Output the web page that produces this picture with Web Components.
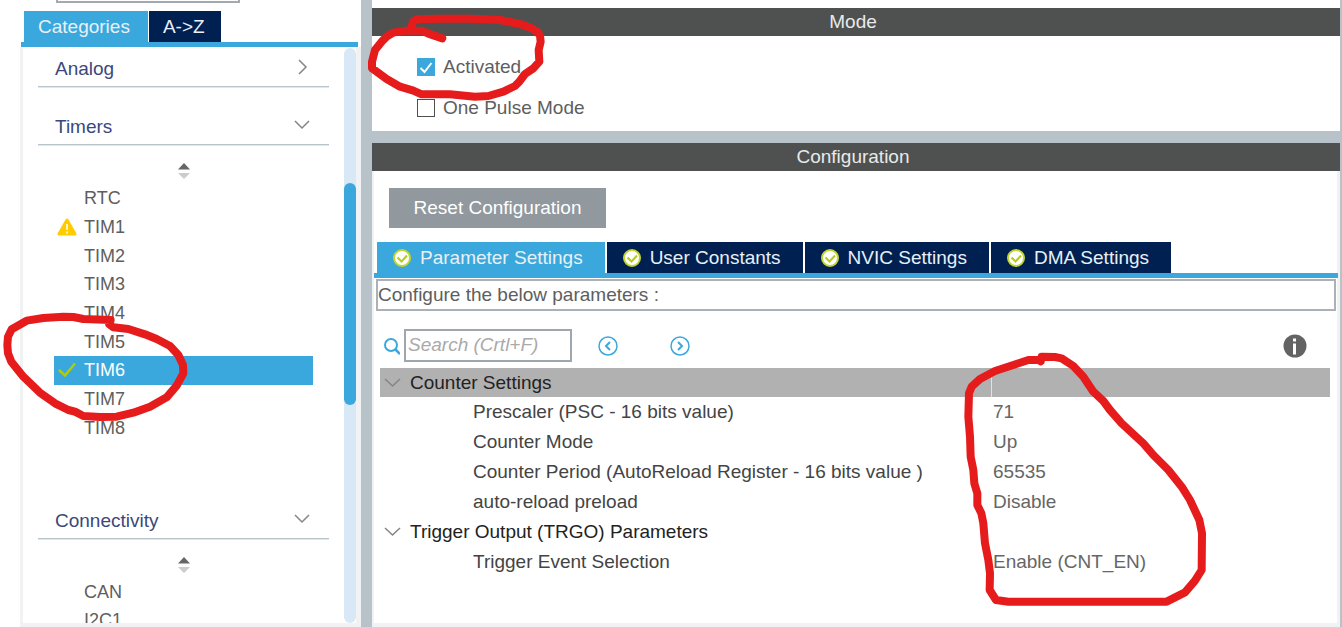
<!DOCTYPE html>
<html lang="en">
<head>
<meta charset="utf-8">
<title>Timer configuration</title>
<style>
html, body { margin: 0; height: 100%; }
body { position: relative; background: #fff; font: 19px/24px "Liberation Sans", Arial, sans-serif; color: #5e5e5e; overflow: hidden;
  --blue: #3aa8dc; --navy: #002052; --edge: #b7c3c9; --frame: #f0f2f4; }
</style>
</head>
<body>
<app-shell>
  <category-browser slot="side">
    <category-group label="Analog"></category-group>
    <category-group label="Timers" open>
      <ip-item>RTC</ip-item>
      <ip-item state="warning">TIM1</ip-item>
      <ip-item>TIM2</ip-item>
      <ip-item>TIM3</ip-item>
      <ip-item>TIM4</ip-item>
      <ip-item>TIM5</ip-item>
      <ip-item state="ok" selected>TIM6</ip-item>
      <ip-item>TIM7</ip-item>
      <ip-item>TIM8</ip-item>
    </category-group>
    <category-group label="Connectivity" open>
      <ip-item>CAN</ip-item>
      <ip-item>I2C1</ip-item>
    </category-group>
  </category-browser>
  <titled-panel label="Mode">
    <mode-options>
      <check-option checked>Activated</check-option>
      <check-option>One Pulse Mode</check-option>
    </mode-options>
  </titled-panel>
  <titled-panel label="Configuration" grow>
    <config-view></config-view>
  </titled-panel>
</app-shell>
<pen-marks></pen-marks>

<script>
const define = (name, html) => customElements.define(name, class extends HTMLElement {
  connectedCallback() {
    if (this.shadowRoot) return;
    const root = this.attachShadow({ mode: 'open' });
    root.innerHTML = '<style>*{box-sizing:border-box}button{font:inherit;border:0;margin:0;padding:0;background:none;color:inherit}svg{display:block;flex:none}</style>' +
      (typeof html === 'function' ? html(this) : html);
  }
});

define('app-shell', `<style>
  :host { display: flex; height: 100vh; }
  .side { flex: 0 0 361px; min-width: 0; display: flex; }
  main { flex: 1; min-width: 0; display: flex; flex-direction: column; gap: 12px; border: solid var(--edge); border-width: 0 2px 0 11px; padding-top: 8px; background: linear-gradient(#fff 8px, var(--edge) 8px); }
</style><div class="side"><slot name="side"></slot></div><main><slot></slot></main>`);

define('category-browser', `<style>
  :host { display: flex; flex-direction: column; flex: 1; min-width: 0; height: 100vh; overflow: hidden; }
  .find { height: 3px; overflow: hidden; display: flex; align-items: flex-end; padding-left: 56px; flex: none; }
  input { width: 184px; height: 30px; border: 2px solid #a3a9ae; flex: none; }
  nav { display: flex; gap: 1px; margin: 8px 3px 0 21px; padding-left: 3px; border-bottom: 5px solid var(--blue); flex: none; }
  button { height: 31px; padding: 0 16px 0 14px; background: var(--navy); color: #e9f0f6; }
  button.on { background: var(--blue); padding-right: 18px; }
  .body { flex: 1; min-height: 0; display: flex; margin-left: 20px; border: solid var(--frame); border-width: 0 5px 4px 3px; }
  .list { flex: 1; min-width: 0; overflow: hidden; padding: 0 15px; }
  .track { width: 12px; margin-top: 1px; border-radius: 6px; background: #d9e8f6; padding-top: 135px; }
  .thumb { height: 222px; border-radius: 6px; background: var(--blue); }
</style>
<div class="find"><input aria-label="Find peripheral"></div>
<nav><button class="on">Categories</button><button>A-&gt;Z</button></nav>
<div class="body"><div class="list"><slot></slot></div><div class="track"><div class="thumb"></div></div></div>`);

define('category-group', el => `<style>
  :host { display: block; padding-bottom: 18px; }
  .head { display: flex; align-items: center; justify-content: space-between; width: 100%; height: 40px; padding: 4px 19px 0 17px; border-bottom: 1px solid #b9c4ca; box-shadow: 0 1px #e1e6e9; color: #3b487b; }
  .head svg { margin-bottom: 4px; }
  .spin { display: block; margin: 17px auto 4px; }
  .items { display: grid; grid-auto-rows: 1fr; margin: 0 16px; }
  .items.long { height: 258px; }
  :host([label="Timers"]) { padding-bottom: 57px; }
</style>
<button class="head">${el.getAttribute('label')}${el.hasAttribute('open')
  ? '<svg width="16" height="16"><path d="M1 4l7 7 7-7" fill="none" stroke="#858585" stroke-width="1.5"/></svg>'
  : '<svg width="16" height="16"><path d="M5 1l7 7-7 7" fill="none" stroke="#858585" stroke-width="1.5"/></svg>'}</button>
${el.hasAttribute('open') ? `<svg class="spin" width="12" height="18"><path d="M0 7.500l6-6.500 6 6.500z" fill="#666"/><path d="M0 11l6 6 6-6z" fill="#ccc"/></svg>
<div class="items ${el.children.length > 2 ? 'long' : ''}"><slot></slot></div>` : ''}`);

define('ip-item', el => `<style>
  :host { display: flex; min-height: 28px; align-items: center; font-size: 18px; padding-left: 3px; }
  :host([selected]) { background: var(--blue); color: #fff; }
  .mark { width: 20px; margin-right: 7px; }
</style><span class="mark">${{
  warning: '<svg width="20" height="18"><path d="M10 2l8 14H2z" fill="#fc0" stroke="#fc0" stroke-width="3" stroke-linejoin="round"/><path d="M10 6v6M10 13.500v2" stroke="#fff" stroke-width="1.500"/></svg>',
  ok: '<svg width="20" height="18"><path d="M2 9l6 5.500L18 2.500" fill="none" stroke="#b4cc04" stroke-width="2.500"/></svg>'
}[el.getAttribute('state')] || ''}</span><slot></slot>`);

define('titled-panel', el => `<style>
  :host { display: flex; flex-direction: column; background: #fff; min-height: 0; }
  :host([grow]) { flex: 1; }
  h2 { margin: 0; height: 28px; line-height: 28px; padding-right: 6px; text-align: center; font-size: 19px; font-weight: 400; background: #4f5150; color: #e8eaea; flex: none; }
</style><h2>${el.getAttribute('label')}</h2><slot></slot>`);

define('mode-options', `<style>
  :host { display: flex; flex-direction: column; gap: 17px; padding: 19px 45px 11px; }
</style><slot></slot>`);

define('check-option', el => `<style>
  :host { display: block; }
  label { display: flex; align-items: center; gap: 8px; }
  input { appearance: none; width: 18px; height: 18px; margin: 0; border: 1px solid #4f4f4f; background: #fff; }
  input:checked { border-color: var(--blue); background: var(--blue); }
  .box { display: grid; }
  .box > * { grid-area: 1 / 1; }
  svg { pointer-events: none; }
</style><label><span class="box"><input type="checkbox" ${el.hasAttribute('checked') ? 'checked' : ''}>
${el.hasAttribute('checked') ? '<svg width="18" height="18"><path d="M3.500 10l4 4L14.500 5" fill="none" stroke="#fff" stroke-width="2"/></svg>' : ''}</span><span><slot></slot></span></label>`);

define('config-view', `<style>
  :host { display: flex; flex-direction: column; flex: 1; min-height: 0; border: solid var(--frame); border-width: 0 3px 4px 2px; }
  .reset { align-self: flex-start; margin: 17px 0 14px 15px; width: 217px; height: 40px; background: #91989e; color: #fff; }
  param-tabs { margin-right: -1px; }
  .intro { margin: 1px 1px 0 2px; height: 32px; line-height: 28px; border: 2px solid #aab1b7; }
  .tools { display: flex; align-items: center; margin: 18px 30px 6px 10px; height: 33px; }
  input { width: 168px; height: 33px; padding: 0 2px 2px; margin: 0 26px 0 4px; border: 2px solid #9fa7ae; font: inherit; border-radius: 0; }
  input::placeholder { color: #aaa; font-style: italic; opacity: 1; }
  .next { margin-left: 52px; }
  .info { margin-left: auto; }
</style>
<button class="reset">Reset Configuration</button>
<param-tabs></param-tabs>
<div class="intro">Configure the below parameters :</div>
<div class="tools">
  <svg width="16" height="18"><circle cx="7" cy="8" r="6" fill="none" stroke="#3aa8dc" stroke-width="2"/><path d="M11 12l5 5" stroke="#3aa8dc" stroke-width="2.500"/></svg>
  <input type="search" placeholder="Search (Crtl+F)" aria-label="Search parameters">
  <button aria-label="Previous"><svg width="20" height="20" fill="none" stroke="#3aa8dc" stroke-width="1.500"><circle cx="10" cy="10" r="9"/><path d="M12 6l-4 4 4 4" stroke-width="2"/></svg></button>
  <button class="next" aria-label="Next"><svg width="20" height="20" fill="none" stroke="#3aa8dc" stroke-width="1.500"><circle cx="10" cy="10" r="9"/><path d="M8 6l4 4-4 4" stroke-width="2"/></svg></button>
  <button class="info" aria-label="Information"><svg width="24" height="24"><circle cx="12" cy="12" r="11.500" fill="#636363"/><path d="M11.500 4.500v3M11.500 9.500v11" stroke="#fff" stroke-width="3"/></svg></button>
</div>
<param-table></param-table>`);

define('param-tabs', `<style>
  :host { display: flex; gap: 2px; padding-left: 3px; border-bottom: 5px solid var(--blue); }
  button { display: flex; align-items: center; gap: 9px; height: 31px; padding: 0 22px 0 16px; background: var(--navy); color: #e9f0f6; white-space: nowrap; }
  button.on { background: var(--blue); }
</style>` + ['Parameter Settings', 'User Constants', 'NVIC Settings', 'DMA Settings'].map((t, i) =>
  `<button class="${i ? '' : 'on'}"><svg width="18" height="18"><circle cx="9" cy="9" r="8" fill="#fff" stroke="#c4d42c" stroke-width="2"/><path d="M4.500 8.500l4 4 5.500-6" fill="none" stroke="#b9cc14" stroke-width="2"/></svg>${t}</button>`).join(''));

const rows = [['Counter Settings'], ['Prescaler (PSC - 16 bits value)', '71'], ['Counter Mode', 'Up'],
  ['Counter Period (AutoReload Register - 16 bits value )', '65535'], ['auto-reload preload', 'Disable'],
  ['Trigger Output (TRGO) Parameters'], ['Trigger Event Selection', 'Enable (CNT_EN)']];
define('param-table', `<style>
  :host { display: block; margin: 0 7px 0 6px; }
  table { width: 100%; border-collapse: collapse; table-layout: fixed; }
  .val { width: 339px; }
  tr { height: 30px; }
  th, td { padding: 0; text-align: left; font-weight: 400; white-space: nowrap; }
  th { padding-left: 93px; color: #444; }
  td { padding-left: 2px; color: #666; }
  .group th { padding-left: 4px; color: #222; }
  .group div { display: flex; align-items: center; gap: 9px; }
  .picked { height: 29px; }
  .picked th, .picked td { background: #b1b1b1; }
  .picked td { border-left: 1px solid #e2e2e2; }
</style><table><colgroup><col><col class="val"></colgroup>` + rows.map((r, i) => r.length > 1
  ? `<tr><th scope="row">${r[0]}</th><td>${r[1]}</td></tr>`
  : `<tr class="group ${i ? '' : 'picked'}"><th scope="row"><div><svg width="17" height="12"><path d="M1 2l7.500 7L16 2" fill="none" stroke="#858585" stroke-width="1.500"/></svg>${r[0]}</div></th><td></td></tr>`).join('') + '</table>');

define('pen-marks', `<style>
  :host { position: absolute; top: 0; left: 0; pointer-events: none; }
</style><svg width="1342" height="627" viewBox="0 0 4026 1881" fill="none" stroke="#e61c1c" stroke-width="24" stroke-linecap="round" stroke-linejoin="round">
<polyline transform="translate(1080 0)" points="153,82 160,64 170,58 240,56 330,56 420,60 480,72 515,85 532,95 540,108 542,125 536,150 538,185 520,205 495,222 478,245 465,258 430,275 385,288 345,290 270,283 185,283 160,272 120,260 80,237 36,205 36,185 45,150 65,125 80,110 100,98 140,92 185,92 205,101 247,115"/>
<polyline transform="translate(0 630)" points="332,330 250,327 220,321 190,320 130,324 80,332 35,358 24,380 22,405 24,430 34,455 70,500 120,548 165,580 205,600 225,605 250,618 300,621 350,620 400,608 450,590 500,562 530,527 550,490 549,465 535,435 510,408 470,387 435,373 385,357 340,352 328,343"/>
<polyline transform="translate(2820 1020)" points="302,64 300,60 265,60 220,75 165,93 120,117 95,140 87,160 85,230 90,290 92,350 100,390 103,430 112,460 112,495 124,520 130,550 135,610 145,660 150,700 149,750 168,780 205,785 680,785 735,757 765,722 785,690 786,580 778,540 750,480 725,440 685,390 640,345 610,310 545,250 510,210 490,183 460,155 430,110 400,78 365,55 345,51 305,50"/>
</svg>`);
</script>
</body>
</html>
